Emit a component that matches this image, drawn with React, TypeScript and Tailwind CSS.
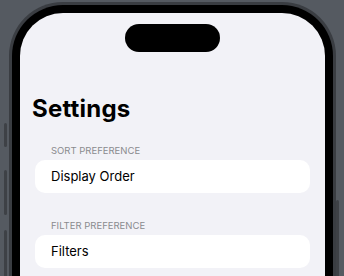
const sections = [
  { label: "SORT PREFERENCE", rows: ["Display Order"] },
  { label: "FILTER PREFERENCE", rows: ["Filters"] }
];

export default function App() {
  return (
    <div
      className="relative h-[276px] w-[344px] overflow-hidden bg-[#555a61]"
      style={{ fontFamily: "Inter, 'Noto Sans', sans-serif" }}
    >
      {/* side buttons */}
      <div className="absolute left-[4px] top-[123px] h-[24px] w-[3px] rounded-sm bg-[#3e4146]" />
      <div className="absolute left-[4px] top-[170px] h-[45px] w-[3px] rounded-sm bg-[#3e4146]" />
      <div className="absolute left-[4px] top-[230px] h-[60px] w-[3px] rounded-sm bg-[#3e4146]" />
      <div className="absolute left-[336px] top-[200px] h-[90px] w-[3px] rounded-sm bg-[#3e4146]" />

      <div className="ml-[9px] mt-[2px] h-[320px] w-[327px] rounded-t-[54px] bg-[#3a3d42] p-[3px]">
        <div className="h-full rounded-t-[51px] bg-black p-[8px]">
          <div className="flex h-full flex-col rounded-t-[43px] bg-[#f2f2f7] px-[15px]">
            <div className="flex justify-center pt-[11px]">
              <div className="h-[28px] w-[95px] rounded-full bg-black" />
            </div>

            <h1 className="ml-[-3px] mt-[42px] text-[24px] leading-[30px] font-bold tracking-[0.2px] text-black">
              Settings
            </h1>

            <div className="mt-[21px] flex flex-col gap-[27px]">
              {sections.map((s) => (
                <section key={s.label} className="flex flex-col gap-[3px]">
                  <div className="px-[16px] text-[9.5px] leading-[12px] text-[#8a8a8e]">
                    {s.label}
                  </div>
                  <div className="rounded-[10px] bg-white">
                    {s.rows.map((r) => (
                      <div
                        key={r}
                        className="flex h-[33px] items-center px-[16px] text-[13px] text-black"
                      >
                        {r}
                      </div>
                    ))}
                  </div>
                </section>
              ))}
            </div>
          </div>
        </div>
      </div>
    </div>
  );
}
